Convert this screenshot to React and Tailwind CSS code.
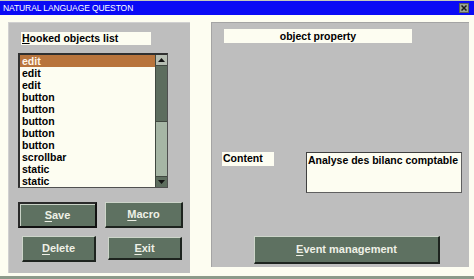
import React from 'react';

const items = ['edit', 'edit', 'edit', 'button', 'button', 'button', 'button', 'button', 'scrollbar', 'static', 'static'];

function Btn({ label, width, height, isDefault }) {
    const first = label[0];
    const rest = label.slice(1);
    return (
        <div
            className={
                'flex items-center justify-center bg-[#5e7161] text-[#eef0e6] text-[11px] font-bold shrink-0 ' +
                (isDefault
                    ? 'border-t-2 border-l-2 border-b-2 border-r-2 border-t-[#2a2a2a] border-l-[#2a2a2a] border-b-[#111] border-r-[#111] shadow-[inset_1px_1px_0_#c9d2c6]'
                    : 'border-t border-l border-b-2 border-r-2 border-t-[#cdd5ca] border-l-[#cdd5ca] border-b-[#1e241f] border-r-[#1e241f]')
            }
            style={{ width, height }}
        >
            <span><span className="underline underline-offset-2">{first}</span>{rest}</span>
        </div>
    );
}

export default function App() {
    return (
        <div className="w-[474px] h-[279px] bg-[#fdfdf1] flex flex-col overflow-hidden font-['Liberation_Sans',Arial,sans-serif] text-black">
            {/* top edge */}
            <div className="h-[1px] bg-[#c4c8bc] shrink-0"></div>
            {/* title bar */}
            <div className="h-[14px] bg-[#0a0af5] flex items-center justify-between pl-[3px] pr-[5px] shrink-0">
                <span className="text-white text-[8.5px] leading-none font-['Liberation_Sans_Narrow','Liberation_Sans',sans-serif] tracking-[-0.1px]">NATURAL LANGUAGE QUESTON</span>
                <div className="w-[10px] h-[10px] bg-[#9aa492] border border-[#5a6256] flex items-center justify-center">
                    <svg width="6" height="6" viewBox="0 0 6 6">
                        <path d="M0.5 0.5 L5.5 5.5 M5.5 0.5 L0.5 5.5" stroke="#1a1a1a" strokeWidth="1.5" />
                    </svg>
                </div>
            </div>

            <div className="flex items-start gap-[21px] pl-[8px] pt-[7px] flex-1">
                {/* left panel */}
                <div className="w-[182px] h-[251px] bg-[#bebebe] border-t border-l border-[#d0d0d0] flex flex-col shrink-0">
                    <div className="ml-[12px] mt-[9px] w-[130px] h-[13px] bg-[#fdfdf1] text-[10.5px] font-bold leading-[13px] pl-[1px]">
                        <span className="underline underline-offset-1">H</span>ooked objects list
                    </div>
                    <div className="ml-[9px] mt-[8px] w-[150px] h-[135px] bg-[#fdfdf1] border-t-2 border-l-2 border-t-[#303030] border-l-[#303030] border-b border-r border-b-[#505050] border-r-[#505050] flex">
                        <div className="flex-1 flex flex-col">
                            {items.map((it, i) => (
                                <div
                                    key={i}
                                    className={
                                        'h-[12.2px] leading-[12px] text-[10.5px] font-bold pl-[2px] ' +
                                        (i === 0 ? 'bg-[#b8743c] text-[#fff6e8]' : '')
                                    }
                                >
                                    {it}
                                </div>
                            ))}
                        </div>
                        <div className="w-[12px] flex flex-col bg-[#a6b6a5] border-l border-[#404840]">
                            <div className="h-[11px] bg-[#b6bdb2] border-b border-[#404840] flex items-center justify-center">
                                <svg width="7" height="4" viewBox="0 0 7 4"><path d="M3.5 0 L7 4 L0 4 Z" fill="#111" /></svg>
                            </div>
                            <div className="h-[56px] bg-[#5d6d5e] border-b border-[#404840]"></div>
                            <div className="flex-1"></div>
                            <div className="h-[11px] bg-[#5d6d5e] border-t border-[#404840] flex items-center justify-center">
                                <svg width="7" height="4" viewBox="0 0 7 4"><path d="M0 0 L7 0 L3.5 4 Z" fill="#111" /></svg>
                            </div>
                        </div>
                    </div>
                    <div className="flex items-start ml-[9px] mt-[14px] gap-[8px]">
                        <Btn label="Save" width={79} height={26} isDefault />
                        <Btn label="Macro" width={78} height={26} />
                    </div>
                    <div className="flex items-start ml-[13px] mt-[8px] gap-[12px]">
                        <Btn label="Delete" width={74} height={26} />
                        <div className="mt-[1px]">
                            <Btn label="Exit" width={74} height={23} />
                        </div>
                    </div>
                </div>

                {/* right panel */}
                <div className="w-[258px] h-[245px] bg-[#bebebe] border-t border-l border-[#a4a4a4] flex flex-col shrink-0">
                    <div className="ml-[12px] mt-[6px] w-[188px] h-[14px] bg-[#fdfdf1] text-[10.5px] font-bold leading-[14px] text-center">
                        object property
                    </div>
                    <div className="flex items-start mt-[109px] ml-[10px]">
                        <div className="w-[52px] h-[14px] bg-[#fdfdf1] text-[10.5px] font-bold leading-[13px] pl-[1px]">Content</div>
                        <div className="ml-[32px] w-[156px] h-[41px] bg-[#fdfdf1] border-t border-l border-[#404040] border-b border-r border-b-[#606060] border-r-[#606060] text-[10.5px] font-bold leading-[13px] pl-[1px] pt-[1px]">
                            Analyse des bilanc comptable
                        </div>
                    </div>
                    <div className="mt-[43px] ml-[42px]">
                        <Btn label="Event management" width={186} height={28} />
                    </div>
                </div>
            </div>

            {/* bottom strip */}
            <div className="h-[3px] bg-[#8d9a8a] shrink-0"></div>
        </div>
    );
}
